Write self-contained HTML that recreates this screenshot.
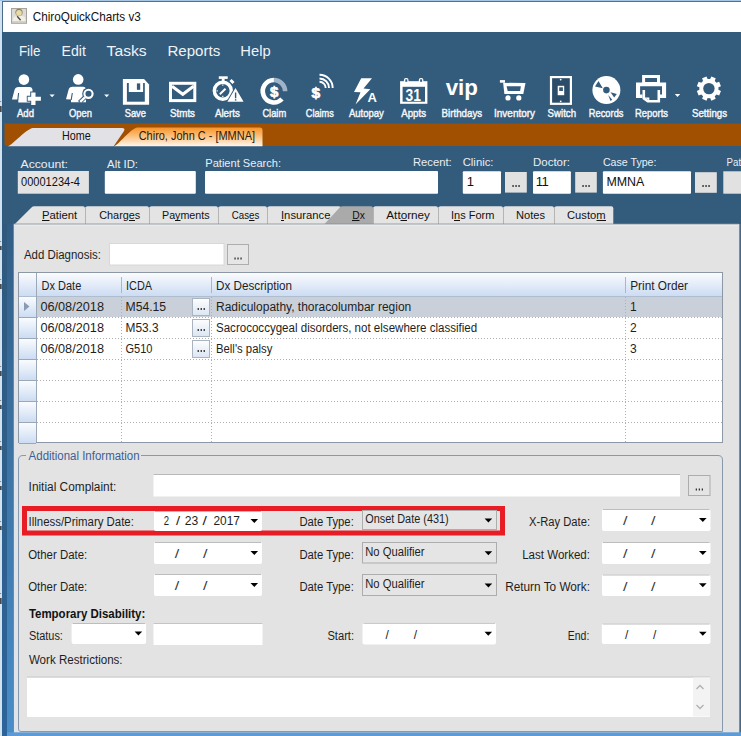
<!DOCTYPE html>
<html><head><meta charset="utf-8"><style>
html,body{margin:0;padding:0;width:741px;height:736px;overflow:hidden;background:#fff}
svg{display:block;font-family:"Liberation Sans",sans-serif}
</style></head><body>
<svg width="741" height="736" viewBox="0 0 741 736" shape-rendering="auto">
<rect x="0" y="0" width="741" height="736" fill="#d3e2ef"/>
<rect x="2" y="1" width="739" height="735" fill="#2f5a80"/>
<rect x="0" y="0" width="741" height="1" fill="#a5c6e4"/>
<rect x="3" y="1" width="738" height="1" fill="#52738f"/>
<rect x="3" y="2" width="738" height="30" fill="#ffffff"/>
<rect x="2" y="1" width="1" height="31" fill="#4a6c8a"/>
<rect x="3" y="32" width="738" height="92" fill="#335b7c"/>
<rect x="0" y="106" width="1.7" height="6" fill="#4a4a4a"/>
<rect x="0" y="101" width="1.2" height="1" fill="#8a8a8a"/>
<rect x="0" y="246" width="1.7" height="4" fill="#4a4a4a"/>
<rect x="0" y="241" width="1.2" height="1" fill="#8a8a8a"/>
<rect x="0" y="284" width="1.7" height="5" fill="#4a4a4a"/>
<rect x="0" y="279" width="1.2" height="1" fill="#8a8a8a"/>
<rect x="0" y="371" width="1.7" height="5" fill="#4a4a4a"/>
<rect x="0" y="366" width="1.2" height="1" fill="#8a8a8a"/>
<rect x="0" y="405" width="1.7" height="4" fill="#4a4a4a"/>
<rect x="0" y="400" width="1.2" height="1" fill="#8a8a8a"/>
<rect x="0" y="446" width="1.7" height="4" fill="#4a4a4a"/>
<rect x="0" y="441" width="1.2" height="1" fill="#8a8a8a"/>
<rect x="0" y="486" width="1.7" height="4" fill="#4a4a4a"/>
<rect x="0" y="481" width="1.2" height="1" fill="#8a8a8a"/>
<rect x="0" y="526" width="1.7" height="4" fill="#4a4a4a"/>
<rect x="0" y="521" width="1.2" height="1" fill="#8a8a8a"/>
<rect x="0" y="598" width="1.7" height="6" fill="#4a4a4a"/>
<rect x="0" y="593" width="1.2" height="1" fill="#8a8a8a"/>
<g><rect x="11" y="8" width="16" height="15.8" fill="#a8a39a"/><rect x="12" y="9" width="14" height="13.8" fill="#dcdcd6"/><circle cx="19" cy="12.4" r="3.6" fill="#8c7f6a"/><circle cx="19" cy="12.9" r="2.9" fill="#e8dba6"/><path d="M12.5 22.8 L13.5 17.5 Q15 16 17 16 L22 16 Q24 16 25 17.5 L25.8 22.8 Z" fill="#f2f0e6"/><path d="M17.2 16.3 L20.6 20.2" stroke="#4d4d4d" stroke-width="1.4"/><rect x="12" y="21.3" width="14" height="1.5" fill="#c9c4b8"/></g>
<text x="32.8" y="21.2" font-size="13" fill="#111" font-weight="normal" text-anchor="start" textLength="108.0" lengthAdjust="spacingAndGlyphs">ChiroQuickCharts v3</text>
<text x="18.9" y="55.5" font-size="15.3" fill="#eef3f8" font-weight="normal" text-anchor="start" textLength="21.6" lengthAdjust="spacingAndGlyphs">File</text>
<text x="61.5" y="55.5" font-size="15.3" fill="#eef3f8" font-weight="normal" text-anchor="start" textLength="24.3" lengthAdjust="spacingAndGlyphs">Edit</text>
<text x="106.6" y="55.5" font-size="15.3" fill="#eef3f8" font-weight="normal" text-anchor="start" textLength="40.1" lengthAdjust="spacingAndGlyphs">Tasks</text>
<text x="167.4" y="55.5" font-size="15.3" fill="#eef3f8" font-weight="normal" text-anchor="start" textLength="52.9" lengthAdjust="spacingAndGlyphs">Reports</text>
<text x="240.3" y="55.5" font-size="15.3" fill="#eef3f8" font-weight="normal" text-anchor="start" textLength="30.3" lengthAdjust="spacingAndGlyphs">Help</text>
<text x="17.0" y="117.0" font-size="11.5" fill="#f4f7fa" font-weight="normal" text-anchor="start" textLength="17.0" lengthAdjust="spacingAndGlyphs" stroke="#f4f7fa" stroke-width="0.45">Add</text>
<text x="69.0" y="117.0" font-size="11.5" fill="#f4f7fa" font-weight="normal" text-anchor="start" textLength="23.0" lengthAdjust="spacingAndGlyphs" stroke="#f4f7fa" stroke-width="0.45">Open</text>
<text x="124.7" y="117.0" font-size="11.5" fill="#f4f7fa" font-weight="normal" text-anchor="start" textLength="21.3" lengthAdjust="spacingAndGlyphs" stroke="#f4f7fa" stroke-width="0.45">Save</text>
<text x="170.0" y="117.0" font-size="11.5" fill="#f4f7fa" font-weight="normal" text-anchor="start" textLength="25.0" lengthAdjust="spacingAndGlyphs" stroke="#f4f7fa" stroke-width="0.45">Stmts</text>
<text x="214.9" y="117.0" font-size="11.5" fill="#f4f7fa" font-weight="normal" text-anchor="start" textLength="25.1" lengthAdjust="spacingAndGlyphs" stroke="#f4f7fa" stroke-width="0.45">Alerts</text>
<text x="262.4" y="117.0" font-size="11.5" fill="#f4f7fa" font-weight="normal" text-anchor="start" textLength="23.8" lengthAdjust="spacingAndGlyphs" stroke="#f4f7fa" stroke-width="0.45">Claim</text>
<text x="305.8" y="117.0" font-size="11.5" fill="#f4f7fa" font-weight="normal" text-anchor="start" textLength="28.0" lengthAdjust="spacingAndGlyphs" stroke="#f4f7fa" stroke-width="0.45">Claims</text>
<text x="348.9" y="117.0" font-size="11.5" fill="#f4f7fa" font-weight="normal" text-anchor="start" textLength="35.0" lengthAdjust="spacingAndGlyphs" stroke="#f4f7fa" stroke-width="0.45">Autopay</text>
<text x="401.2" y="117.0" font-size="11.5" fill="#f4f7fa" font-weight="normal" text-anchor="start" textLength="24.8" lengthAdjust="spacingAndGlyphs" stroke="#f4f7fa" stroke-width="0.45">Appts</text>
<text x="441.6" y="117.0" font-size="11.5" fill="#f4f7fa" font-weight="normal" text-anchor="start" textLength="40.6" lengthAdjust="spacingAndGlyphs" stroke="#f4f7fa" stroke-width="0.45">Birthdays</text>
<text x="494.0" y="117.0" font-size="11.5" fill="#f4f7fa" font-weight="normal" text-anchor="start" textLength="41.1" lengthAdjust="spacingAndGlyphs" stroke="#f4f7fa" stroke-width="0.45">Inventory</text>
<text x="547.6" y="117.0" font-size="11.5" fill="#f4f7fa" font-weight="normal" text-anchor="start" textLength="28.4" lengthAdjust="spacingAndGlyphs" stroke="#f4f7fa" stroke-width="0.45">Switch</text>
<text x="588.8" y="117.0" font-size="11.5" fill="#f4f7fa" font-weight="normal" text-anchor="start" textLength="34.7" lengthAdjust="spacingAndGlyphs" stroke="#f4f7fa" stroke-width="0.45">Records</text>
<text x="635.0" y="117.0" font-size="11.5" fill="#f4f7fa" font-weight="normal" text-anchor="start" textLength="33.0" lengthAdjust="spacingAndGlyphs" stroke="#f4f7fa" stroke-width="0.45">Reports</text>
<text x="691.9" y="117.0" font-size="11.5" fill="#f4f7fa" font-weight="normal" text-anchor="start" textLength="35.2" lengthAdjust="spacingAndGlyphs" stroke="#f4f7fa" stroke-width="0.45">Settings</text>
<path d="M4.5 123.5 L741 123.5 L741 146 L7 146 Q4.5 146 4.5 143.5 Z" fill="#a05000"/>
<path d="M7.5 146.5 C13 144.5, 26 129, 33 128 L122 128 Q125.5 128 124 131 L113.5 146.5 Z" fill="#e2e2e6"/>
<text x="62.0" y="139.6" font-size="12.5" fill="#111" font-weight="normal" text-anchor="start" textLength="28.7" lengthAdjust="spacingAndGlyphs">Home</text>
<defs><linearGradient id="og" x1="0" y1="0" x2="0" y2="1"><stop offset="0" stop-color="#f7952a"/><stop offset="0.45" stop-color="#fbbf7c"/><stop offset="1" stop-color="#fff8f0"/></linearGradient><linearGradient id="hg" x1="0" y1="0" x2="0" y2="1"><stop offset="0" stop-color="#fafcfe"/><stop offset="1" stop-color="#ccdcf3"/></linearGradient><linearGradient id="bg" x1="0" y1="0" x2="0" y2="1"><stop offset="0" stop-color="#fdfeff"/><stop offset="1" stop-color="#dbe6f3"/></linearGradient></defs>
<path d="M113.5 146.5 C119 144.5, 130 129, 137 127.5 L260 127.5 Q262.5 127.5 262.5 130 L262.5 146.5 Z" fill="url(#og)"/>
<text x="138.7" y="139.8" font-size="12.5" fill="#2a1a0a" font-weight="normal" text-anchor="start" textLength="116.3" lengthAdjust="spacingAndGlyphs">Chiro, John C - [MMNA]</text>
<rect x="3" y="146.5" width="738" height="78" fill="#335b7c"/>
<text x="20.5" y="167.5" font-size="11.6" fill="#e9eff5" font-weight="normal" text-anchor="start" textLength="47.5" lengthAdjust="spacingAndGlyphs">Account:</text>
<text x="107.1" y="167.7" font-size="11.6" fill="#e9eff5" font-weight="normal" text-anchor="start" textLength="30.9" lengthAdjust="spacingAndGlyphs">Alt ID:</text>
<text x="205.3" y="166.6" font-size="11.6" fill="#e9eff5" font-weight="normal" text-anchor="start" textLength="75.7" lengthAdjust="spacingAndGlyphs">Patient Search:</text>
<text x="413.0" y="165.8" font-size="11.6" fill="#e9eff5" font-weight="normal" text-anchor="start" textLength="38.7" lengthAdjust="spacingAndGlyphs">Recent:</text>
<text x="462.7" y="165.8" font-size="11.6" fill="#e9eff5" font-weight="normal" text-anchor="start" textLength="30.8" lengthAdjust="spacingAndGlyphs">Clinic:</text>
<text x="533.0" y="165.8" font-size="11.6" fill="#e9eff5" font-weight="normal" text-anchor="start" textLength="37.0" lengthAdjust="spacingAndGlyphs">Doctor:</text>
<text x="602.9" y="166.2" font-size="11.6" fill="#e9eff5" font-weight="normal" text-anchor="start" textLength="53.6" lengthAdjust="spacingAndGlyphs">Case Type:</text>
<text x="726.6" y="166.0" font-size="11.6" fill="#e9eff5" font-weight="normal" text-anchor="start" textLength="30.0" lengthAdjust="spacingAndGlyphs">Patient</text>
<rect x="17.8" y="171" width="71.1" height="22.7" fill="#e3e3e3"/>
<text x="21.0" y="185.8" font-size="13" fill="#111" font-weight="normal" text-anchor="start" textLength="59.0" lengthAdjust="spacingAndGlyphs">00001234-4</text>
<rect x="104.8" y="171.1" width="91" height="22.6" fill="#ffffff" rx="1"/>
<rect x="205" y="171.1" width="233" height="22.6" fill="#ffffff" rx="1"/>
<rect x="462.8" y="171.2" width="38.2" height="22.6" fill="#ffffff" rx="1"/>
<text x="466.7" y="185.5" font-size="13" fill="#111" font-weight="normal" text-anchor="start">1</text>
<rect x="505" y="172" width="21.8" height="20.6" fill="#e1e1e1"/>
<rect x="512.4" y="185" width="1.3" height="2" fill="#2a2a2a"/>
<rect x="515.4" y="185" width="1.3" height="2" fill="#2a2a2a"/>
<rect x="518.4" y="185" width="1.3" height="2" fill="#2a2a2a"/>
<rect x="533" y="171.2" width="37.9" height="22.6" fill="#ffffff" rx="1"/>
<text x="535.8" y="185.5" font-size="13" fill="#111" font-weight="normal" text-anchor="start">1</text>
<text x="541.6" y="185.5" font-size="13" fill="#111" font-weight="normal" text-anchor="start">1</text>
<rect x="575.2" y="172" width="21.6" height="20.6" fill="#e1e1e1"/>
<rect x="582.4" y="185" width="1.3" height="2" fill="#2a2a2a"/>
<rect x="585.4" y="185" width="1.3" height="2" fill="#2a2a2a"/>
<rect x="588.4" y="185" width="1.3" height="2" fill="#2a2a2a"/>
<rect x="602.9" y="171.2" width="88.1" height="22.5" fill="#ffffff" rx="1"/>
<text x="606.4" y="185.5" font-size="13" fill="#111" font-weight="normal" text-anchor="start" textLength="37.9" lengthAdjust="spacingAndGlyphs">MMNA</text>
<rect x="695" y="172.2" width="21.8" height="20.6" fill="#e1e1e1"/>
<rect x="702.4" y="185" width="1.3" height="2" fill="#2a2a2a"/>
<rect x="705.4" y="185" width="1.3" height="2" fill="#2a2a2a"/>
<rect x="708.4" y="185" width="1.3" height="2" fill="#2a2a2a"/>
<rect x="723.3" y="171.3" width="20" height="22.4" fill="#e1e1e1"/>
<path d="M14.9 224 L31.5 207.5 Q32.5 206.2 34.5 206.2 L83 206.2 Q85 206.2 85 208.2 L85 224 Z" fill="#e4e4e4"/>
<text x="42.0" y="218.7" font-size="11.6" fill="#111" font-weight="normal" text-anchor="start" textLength="35.2" lengthAdjust="spacingAndGlyphs">Patient</text>
<rect x="42.0" y="220" width="7.5" height="1" fill="#111"/>
<path d="M85.5 224 L85.5 208.2 Q85.5 206.2 87.5 206.2 L147 206.2 Q149 206.2 149 208.2 L149 224 Z" fill="#e4e4e4"/>
<rect x="85" y="207" width="1" height="17" fill="#b4b4b4"/>
<text x="99.2" y="218.7" font-size="11.6" fill="#111" font-weight="normal" text-anchor="start" textLength="41.1" lengthAdjust="spacingAndGlyphs">Charges</text>
<rect x="129.0" y="220" width="6.0" height="1" fill="#111"/>
<path d="M149.5 224 L149.5 208.2 Q149.5 206.2 151.5 206.2 L216 206.2 Q218 206.2 218 208.2 L218 224 Z" fill="#e4e4e4"/>
<rect x="149" y="207" width="1" height="17" fill="#b4b4b4"/>
<text x="162.0" y="218.7" font-size="11.6" fill="#111" font-weight="normal" text-anchor="start" textLength="47.6" lengthAdjust="spacingAndGlyphs">Payments</text>
<rect x="175.0" y="220" width="5.5" height="1" fill="#111"/>
<path d="M218.5 224 L218.5 208.2 Q218.5 206.2 220.5 206.2 L265 206.2 Q267 206.2 267 208.2 L267 224 Z" fill="#e4e4e4"/>
<rect x="218" y="207" width="1" height="17" fill="#b4b4b4"/>
<text x="231.8" y="218.7" font-size="11.6" fill="#111" font-weight="normal" text-anchor="start" textLength="27.5" lengthAdjust="spacingAndGlyphs">Cases</text>
<rect x="249.0" y="220" width="5.5" height="1" fill="#111"/>
<path d="M267.5 224 L267.5 208.2 Q267.5 206.2 269.5 206.2 L339 206.2 Q341 206.2 341 208.2 L341 224 Z" fill="#e4e4e4"/>
<rect x="267" y="207" width="1" height="17" fill="#b4b4b4"/>
<text x="281.0" y="218.7" font-size="11.6" fill="#111" font-weight="normal" text-anchor="start" textLength="49.4" lengthAdjust="spacingAndGlyphs">Insurance</text>
<rect x="281.0" y="220" width="3.0" height="1" fill="#111"/>
<path d="M373.5 224 L373.5 208.2 Q373.5 206.2 375.5 206.2 L436 206.2 Q438 206.2 438 208.2 L438 224 Z" fill="#e4e4e4"/>
<rect x="373" y="207" width="1" height="17" fill="#b4b4b4"/>
<text x="386.3" y="218.7" font-size="11.6" fill="#111" font-weight="normal" text-anchor="start" textLength="43.7" lengthAdjust="spacingAndGlyphs">Attorney</text>
<rect x="400.5" y="220" width="6.5" height="1" fill="#111"/>
<path d="M438.5 224 L438.5 208.2 Q438.5 206.2 440.5 206.2 L501 206.2 Q503 206.2 503 208.2 L503 224 Z" fill="#e4e4e4"/>
<rect x="438" y="207" width="1" height="17" fill="#b4b4b4"/>
<text x="451.0" y="218.7" font-size="11.6" fill="#111" font-weight="normal" text-anchor="start" textLength="43.4" lengthAdjust="spacingAndGlyphs">Ins Form</text>
<rect x="454.0" y="220" width="6.0" height="1" fill="#111"/>
<path d="M503.5 224 L503.5 208.2 Q503.5 206.2 505.5 206.2 L552 206.2 Q554 206.2 554 208.2 L554 224 Z" fill="#e4e4e4"/>
<rect x="503" y="207" width="1" height="17" fill="#b4b4b4"/>
<text x="516.0" y="218.7" font-size="11.6" fill="#111" font-weight="normal" text-anchor="start" textLength="29.0" lengthAdjust="spacingAndGlyphs">Notes</text>
<path d="M554.5 224 L554.5 208.2 Q554.5 206.2 556.5 206.2 L611.3 206.2 Q613.3 206.2 613.3 208.2 L613.3 224 Z" fill="#e4e4e4"/>
<rect x="554" y="207" width="1" height="17" fill="#b4b4b4"/>
<text x="567.0" y="218.7" font-size="11.6" fill="#111" font-weight="normal" text-anchor="start" textLength="38.6" lengthAdjust="spacingAndGlyphs">Custom</text>
<rect x="596.5" y="220" width="9.5" height="1" fill="#111"/>
<path d="M324.5 224 L340 207.2 Q341 206.2 342.5 206.2 L371 206.2 Q373 206.2 373 208.2 L373 224 Z" fill="#aaaaaa"/>
<text x="352.2" y="218.7" font-size="11.6" fill="#111" font-weight="normal" text-anchor="start" textLength="12.6" lengthAdjust="spacingAndGlyphs">Dx</text>
<rect x="352.0" y="220" width="7.5" height="1" fill="#111"/>
<rect x="13.3" y="224" width="725.7" height="509" fill="#e3e3e3"/>
<rect x="13.3" y="223.6" width="725.7" height="1" fill="#7d8c99"/>
<rect x="13.3" y="224.6" width="725.7" height="1" fill="#eeeeee"/>
<rect x="738.6" y="224" width="1" height="509" fill="#d6e0ea"/>
<rect x="739.6" y="224" width="1.4" height="509" fill="#4a6884"/>
<defs><linearGradient id="ls1" x1="0" y1="0" x2="0" y2="1"><stop offset="0" stop-color="#30597d"/><stop offset="1" stop-color="#2c6499"/></linearGradient><linearGradient id="ls2" x1="0" y1="0" x2="0" y2="1"><stop offset="0" stop-color="#325e86"/><stop offset="1" stop-color="#4a8dc8"/></linearGradient></defs>
<rect x="2" y="224" width="5" height="512" fill="url(#ls1)"/>
<rect x="7" y="224" width="6.3" height="512" fill="url(#ls2)"/>
<rect x="13" y="224" width="0.8" height="509" fill="#6f7f8f"/>
<rect x="14" y="226" width="4" height="507" fill="#e0e4e9"/>
<rect x="7" y="732.3" width="734" height="3.7" fill="#5d9bd6"/>
<text x="23.9" y="258.6" font-size="12" fill="#1e1e1e" font-weight="normal" text-anchor="start" textLength="77.0" lengthAdjust="spacingAndGlyphs">Add Diagnosis:</text>
<rect x="109.5" y="243.5" width="114.5" height="21.5" fill="#ffffff" stroke="#d8d8d8" stroke-width="1"/>
<rect x="227.5" y="244.5" width="21" height="20" fill="#e6e6e6" stroke="#adadad" stroke-width="1"/>
<rect x="234.4" y="257.5" width="1.3" height="2" fill="#333"/>
<rect x="237.4" y="257.5" width="1.3" height="2" fill="#333"/>
<rect x="240.4" y="257.5" width="1.3" height="2" fill="#333"/>
<rect x="18" y="272" width="705" height="171" fill="#8c98a6"/>
<rect x="19" y="273" width="703" height="169" fill="#ffffff"/>
<rect x="19" y="273" width="703" height="23" fill="url(#hg)"/>
<rect x="19" y="296" width="703" height="1" fill="#aebdd0"/>
<rect x="19" y="297" width="17" height="20" fill="url(#hg)"/>
<rect x="19" y="317" width="17" height="1" fill="#9aa8b8"/>
<rect x="19" y="318" width="17" height="20" fill="url(#hg)"/>
<rect x="19" y="338" width="17" height="1" fill="#9aa8b8"/>
<rect x="19" y="339" width="17" height="20" fill="url(#hg)"/>
<rect x="19" y="359" width="17" height="1" fill="#9aa8b8"/>
<rect x="19" y="360" width="17" height="20" fill="url(#hg)"/>
<rect x="19" y="380" width="17" height="1" fill="#9aa8b8"/>
<rect x="19" y="381" width="17" height="20" fill="url(#hg)"/>
<rect x="19" y="401" width="17" height="1" fill="#9aa8b8"/>
<rect x="19" y="402" width="17" height="20" fill="url(#hg)"/>
<rect x="19" y="422" width="17" height="1" fill="#9aa8b8"/>
<rect x="19" y="423" width="17" height="20" fill="url(#hg)"/>
<rect x="19" y="443" width="17" height="1" fill="#9aa8b8"/>
<rect x="36" y="273" width="1" height="169" fill="#9aa8b8"/>
<rect x="37" y="297" width="685" height="20" fill="#c9d0d9"/>
<line x1="37" y1="317.5" x2="722" y2="317.5" stroke="#b0b0b0" stroke-width="1" stroke-dasharray="1 2"/>
<line x1="37" y1="338.5" x2="722" y2="338.5" stroke="#b0b0b0" stroke-width="1" stroke-dasharray="1 2"/>
<line x1="37" y1="359.5" x2="722" y2="359.5" stroke="#b0b0b0" stroke-width="1" stroke-dasharray="1 2"/>
<line x1="37" y1="380.5" x2="722" y2="380.5" stroke="#b0b0b0" stroke-width="1" stroke-dasharray="1 2"/>
<line x1="37" y1="401.5" x2="722" y2="401.5" stroke="#b0b0b0" stroke-width="1" stroke-dasharray="1 2"/>
<line x1="37" y1="422.5" x2="722" y2="422.5" stroke="#b0b0b0" stroke-width="1" stroke-dasharray="1 2"/>
<line x1="121.5" y1="297" x2="121.5" y2="442" stroke="#b0b0b0" stroke-width="1" stroke-dasharray="1 2"/>
<rect x="121.0" y="277" width="1" height="16" fill="#aab6c4"/>
<line x1="211.5" y1="297" x2="211.5" y2="442" stroke="#b0b0b0" stroke-width="1" stroke-dasharray="1 2"/>
<rect x="211.0" y="277" width="1" height="16" fill="#aab6c4"/>
<line x1="625.5" y1="297" x2="625.5" y2="442" stroke="#b0b0b0" stroke-width="1" stroke-dasharray="1 2"/>
<rect x="625.0" y="277" width="1" height="16" fill="#aab6c4"/>
<path d="M24 302 L29.5 306.5 L24 311 Z" fill="#8a9ab0"/>
<text x="41.6" y="289.6" font-size="12" fill="#1e1e1e" font-weight="normal" text-anchor="start" textLength="39.7" lengthAdjust="spacingAndGlyphs">Dx Date</text>
<text x="126.0" y="289.6" font-size="12" fill="#1e1e1e" font-weight="normal" text-anchor="start" textLength="26.0" lengthAdjust="spacingAndGlyphs">ICDA</text>
<text x="216.0" y="289.6" font-size="12" fill="#1e1e1e" font-weight="normal" text-anchor="start" textLength="76.0" lengthAdjust="spacingAndGlyphs">Dx Description</text>
<text x="630.2" y="289.6" font-size="12" fill="#1e1e1e" font-weight="normal" text-anchor="start" textLength="57.8" lengthAdjust="spacingAndGlyphs">Print Order</text>
<text x="40.4" y="311.2" font-size="12" fill="#1e1e1e" font-weight="normal" text-anchor="start" textLength="63.6" lengthAdjust="spacingAndGlyphs">06/08/2018</text>
<text x="125.5" y="311.2" font-size="12" fill="#1e1e1e" font-weight="normal" text-anchor="start" textLength="40.6" lengthAdjust="spacingAndGlyphs">M54.15</text>
<text x="216.0" y="311.2" font-size="12" fill="#1e1e1e" font-weight="normal" text-anchor="start" textLength="195.3" lengthAdjust="spacingAndGlyphs">Radiculopathy, thoracolumbar region</text>
<text x="630.0" y="311.2" font-size="12" fill="#1e1e1e" font-weight="normal" text-anchor="start">1</text>
<rect x="192.5" y="298.5" width="17" height="17" fill="url(#bg)" stroke="#a9b4c0"/>
<rect x="197.6" y="308" width="1.3" height="2" fill="#333"/>
<rect x="200.6" y="308" width="1.3" height="2" fill="#333"/>
<rect x="203.6" y="308" width="1.3" height="2" fill="#333"/>
<text x="40.4" y="332.1" font-size="12" fill="#1e1e1e" font-weight="normal" text-anchor="start" textLength="63.6" lengthAdjust="spacingAndGlyphs">06/08/2018</text>
<text x="125.5" y="332.1" font-size="12" fill="#1e1e1e" font-weight="normal" text-anchor="start" textLength="33.0" lengthAdjust="spacingAndGlyphs">M53.3</text>
<text x="216.0" y="332.1" font-size="12" fill="#1e1e1e" font-weight="normal" text-anchor="start" textLength="261.2" lengthAdjust="spacingAndGlyphs">Sacrococcygeal disorders, not elsewhere classified</text>
<text x="630.0" y="332.1" font-size="12" fill="#1e1e1e" font-weight="normal" text-anchor="start">2</text>
<rect x="192.5" y="319.5" width="17" height="17" fill="url(#bg)" stroke="#a9b4c0"/>
<rect x="197.6" y="329" width="1.3" height="2" fill="#333"/>
<rect x="200.6" y="329" width="1.3" height="2" fill="#333"/>
<rect x="203.6" y="329" width="1.3" height="2" fill="#333"/>
<text x="40.4" y="353.0" font-size="12" fill="#1e1e1e" font-weight="normal" text-anchor="start" textLength="63.6" lengthAdjust="spacingAndGlyphs">06/08/2018</text>
<text x="125.5" y="353.0" font-size="12" fill="#1e1e1e" font-weight="normal" text-anchor="start" textLength="27.0" lengthAdjust="spacingAndGlyphs">G510</text>
<text x="216.0" y="353.0" font-size="12" fill="#1e1e1e" font-weight="normal" text-anchor="start" textLength="56.3" lengthAdjust="spacingAndGlyphs">Bell's palsy</text>
<text x="630.0" y="353.0" font-size="12" fill="#1e1e1e" font-weight="normal" text-anchor="start">3</text>
<rect x="192.5" y="340.5" width="17" height="17" fill="url(#bg)" stroke="#a9b4c0"/>
<rect x="197.6" y="350" width="1.3" height="2" fill="#333"/>
<rect x="200.6" y="350" width="1.3" height="2" fill="#333"/>
<rect x="203.6" y="350" width="1.3" height="2" fill="#333"/>
<path d="M26 455.5 L23 455.5 Q18.5 455.5 18.5 460 L18.5 729 Q18.5 731.5 21 731.5 L722.5 731.5 L722.5 460 Q722.5 455.5 718 455.5 L141 455.5" fill="none" stroke="#8899ae" stroke-width="1"/>
<text x="28.6" y="459.6" font-size="12" fill="#3d5f95" font-weight="normal" text-anchor="start" textLength="111.0" lengthAdjust="spacingAndGlyphs">Additional Information</text>
<text x="28.6" y="490.6" font-size="12" fill="#1e1e1e" font-weight="normal" text-anchor="start" textLength="87.7" lengthAdjust="spacingAndGlyphs">Initial Complaint:</text>
<rect x="153.5" y="474" width="526.5" height="22.5" fill="#ffffff"/>
<rect x="153.5" y="474" width="526.5" height="1" fill="#b9b9b9"/>
<rect x="688.5" y="475.5" width="21.5" height="20" fill="#e4e4e4" stroke="#adadad" stroke-width="1"/>
<rect x="695.6999999999999" y="488.5" width="1.3" height="2" fill="#333"/>
<rect x="698.6999999999999" y="488.5" width="1.3" height="2" fill="#333"/>
<rect x="701.6999999999999" y="488.5" width="1.3" height="2" fill="#333"/>
<rect x="24.5" y="508.5" width="478" height="24.5" fill="none" stroke="#e81c25" stroke-width="5"/>
<text x="28.6" y="525.8" font-size="12" fill="#1e1e1e" font-weight="normal" text-anchor="start" textLength="105.3" lengthAdjust="spacingAndGlyphs">Illness/Primary Date:</text>
<text x="28.2" y="558.8" font-size="12" fill="#1e1e1e" font-weight="normal" text-anchor="start" textLength="59.0" lengthAdjust="spacingAndGlyphs">Other Date:</text>
<text x="28.2" y="590.5" font-size="12" fill="#1e1e1e" font-weight="normal" text-anchor="start" textLength="59.0" lengthAdjust="spacingAndGlyphs">Other Date:</text>
<rect x="154" y="511" width="108" height="20" fill="#ffffff" rx="2"/>
<rect x="155" y="511" width="106" height="1" fill="#bdbdbd"/>
<path d="M250.5 519.0 L258.1 519.0 L254.3 523.0 Z" fill="#000"/>
<rect x="154" y="542" width="108" height="22" fill="#ffffff" rx="2"/>
<rect x="155" y="542" width="106" height="1" fill="#bdbdbd"/>
<path d="M250.5 551.0 L258.1 551.0 L254.3 555.0 Z" fill="#000"/>
<rect x="154" y="574" width="108" height="22" fill="#ffffff" rx="2"/>
<rect x="155" y="574" width="106" height="1" fill="#bdbdbd"/>
<path d="M250.5 583.0 L258.1 583.0 L254.3 587.0 Z" fill="#000"/>
<text x="163.8" y="525.0" font-size="13" fill="#1e1e1e" font-weight="normal" text-anchor="start" textLength="5.3" lengthAdjust="spacingAndGlyphs">2</text>
<text x="175.9" y="525.0" font-size="13" fill="#1e1e1e" font-weight="normal" text-anchor="start" textLength="4.1" lengthAdjust="spacingAndGlyphs">/</text>
<text x="184.8" y="525.0" font-size="13" fill="#1e1e1e" font-weight="normal" text-anchor="start" textLength="13.5" lengthAdjust="spacingAndGlyphs">23</text>
<text x="202.6" y="525.0" font-size="13" fill="#1e1e1e" font-weight="normal" text-anchor="start" textLength="4.4" lengthAdjust="spacingAndGlyphs">/</text>
<text x="213.5" y="525.0" font-size="13" fill="#1e1e1e" font-weight="normal" text-anchor="start" textLength="26.4" lengthAdjust="spacingAndGlyphs">2017</text>
<text x="174.8" y="558.0" font-size="12" fill="#3a3a3a" font-weight="normal" text-anchor="start" textLength="4.5" lengthAdjust="spacingAndGlyphs">/</text>
<text x="202.9" y="558.0" font-size="12" fill="#3a3a3a" font-weight="normal" text-anchor="start" textLength="4.5" lengthAdjust="spacingAndGlyphs">/</text>
<text x="174.8" y="589.5" font-size="12" fill="#3a3a3a" font-weight="normal" text-anchor="start" textLength="4.5" lengthAdjust="spacingAndGlyphs">/</text>
<text x="202.9" y="589.5" font-size="12" fill="#3a3a3a" font-weight="normal" text-anchor="start" textLength="4.5" lengthAdjust="spacingAndGlyphs">/</text>
<text x="299.4" y="526.0" font-size="12" fill="#1e1e1e" font-weight="normal" text-anchor="start" textLength="54.4" lengthAdjust="spacingAndGlyphs">Date Type:</text>
<text x="299.4" y="559.3" font-size="12" fill="#1e1e1e" font-weight="normal" text-anchor="start" textLength="54.4" lengthAdjust="spacingAndGlyphs">Date Type:</text>
<text x="299.4" y="590.9" font-size="12" fill="#1e1e1e" font-weight="normal" text-anchor="start" textLength="54.4" lengthAdjust="spacingAndGlyphs">Date Type:</text>
<rect x="362.5" y="510.5" width="134" height="19" fill="#e5e5e5" stroke="#adadad" stroke-width="1"/>
<text x="365.2" y="523.3" font-size="12" fill="#1e1e1e" font-weight="normal" text-anchor="start" textLength="83.5" lengthAdjust="spacingAndGlyphs">Onset Date (431)</text>
<path d="M484.6 518.6 L492.2 518.6 L488.4 522.4 Z" fill="#000"/>
<rect x="362.5" y="542.5" width="134" height="20.5" fill="#e5e5e5" stroke="#adadad" stroke-width="1"/>
<text x="365.2" y="556.0" font-size="12" fill="#1e1e1e" font-weight="normal" text-anchor="start" textLength="59.3" lengthAdjust="spacingAndGlyphs">No Qualifier</text>
<path d="M484.6 551.35 L492.2 551.35 L488.4 555.15 Z" fill="#000"/>
<rect x="362.5" y="574.5" width="134" height="21" fill="#e5e5e5" stroke="#adadad" stroke-width="1"/>
<text x="365.2" y="588.3" font-size="12" fill="#1e1e1e" font-weight="normal" text-anchor="start" textLength="59.3" lengthAdjust="spacingAndGlyphs">No Qualifier</text>
<path d="M484.6 583.6 L492.2 583.6 L488.4 587.4 Z" fill="#000"/>
<text x="590.0" y="526.0" font-size="12" fill="#1e1e1e" font-weight="normal" text-anchor="end" textLength="61.0" lengthAdjust="spacingAndGlyphs">X-Ray Date:</text>
<text x="590.0" y="558.8" font-size="12" fill="#1e1e1e" font-weight="normal" text-anchor="end" textLength="67.8" lengthAdjust="spacingAndGlyphs">Last Worked:</text>
<text x="590.0" y="590.5" font-size="12" fill="#1e1e1e" font-weight="normal" text-anchor="end" textLength="84.8" lengthAdjust="spacingAndGlyphs">Return To Work:</text>
<rect x="602" y="509" width="108.5" height="22" fill="#ffffff" rx="2"/>
<rect x="603" y="509" width="106.5" height="1" fill="#bdbdbd"/>
<path d="M699.0 518.0 L706.5999999999999 518.0 L702.8 522.0 Z" fill="#000"/>
<text x="623.0" y="525.0" font-size="12" fill="#3a3a3a" font-weight="normal" text-anchor="start" textLength="4.5" lengthAdjust="spacingAndGlyphs">/</text>
<text x="651.0" y="525.0" font-size="12" fill="#3a3a3a" font-weight="normal" text-anchor="start" textLength="4.5" lengthAdjust="spacingAndGlyphs">/</text>
<rect x="602" y="542" width="108.5" height="22" fill="#ffffff" rx="2"/>
<rect x="603" y="542" width="106.5" height="1" fill="#bdbdbd"/>
<path d="M699.0 551.0 L706.5999999999999 551.0 L702.8 555.0 Z" fill="#000"/>
<text x="623.0" y="558.0" font-size="12" fill="#3a3a3a" font-weight="normal" text-anchor="start" textLength="4.5" lengthAdjust="spacingAndGlyphs">/</text>
<text x="651.0" y="558.0" font-size="12" fill="#3a3a3a" font-weight="normal" text-anchor="start" textLength="4.5" lengthAdjust="spacingAndGlyphs">/</text>
<rect x="602" y="574.5" width="108.5" height="21.5" fill="#ffffff" rx="2"/>
<rect x="603" y="574.5" width="106.5" height="1" fill="#bdbdbd"/>
<path d="M699.0 583.25 L706.5999999999999 583.25 L702.8 587.25 Z" fill="#000"/>
<text x="623.0" y="590.5" font-size="12" fill="#3a3a3a" font-weight="normal" text-anchor="start" textLength="4.5" lengthAdjust="spacingAndGlyphs">/</text>
<text x="651.0" y="590.5" font-size="12" fill="#3a3a3a" font-weight="normal" text-anchor="start" textLength="4.5" lengthAdjust="spacingAndGlyphs">/</text>
<text x="28.9" y="617.7" font-size="12" fill="#111" font-weight="bold" text-anchor="start" textLength="116.4" lengthAdjust="spacingAndGlyphs">Temporary Disability:</text>
<text x="28.9" y="639.6" font-size="12" fill="#1e1e1e" font-weight="normal" text-anchor="start" textLength="34.0" lengthAdjust="spacingAndGlyphs">Status:</text>
<rect x="71.6" y="623" width="74.5" height="21" fill="#ffffff" rx="2"/>
<rect x="72.6" y="623" width="72.5" height="1" fill="#bdbdbd"/>
<path d="M134.6 631.5 L142.20000000000002 631.5 L138.4 635.5 Z" fill="#000"/>
<rect x="153.5" y="623" width="109" height="22" fill="#ffffff"/>
<rect x="153.5" y="623" width="109" height="1" fill="#c4c4c4"/>
<text x="354.1" y="639.5" font-size="12" fill="#1e1e1e" font-weight="normal" text-anchor="end" textLength="26.7" lengthAdjust="spacingAndGlyphs">Start:</text>
<rect x="362.5" y="622.8" width="133.5" height="21.8" fill="#ffffff" rx="2"/>
<rect x="363.5" y="622.8" width="131.5" height="1" fill="#bdbdbd"/>
<path d="M484.5 631.6999999999999 L492.1 631.6999999999999 L488.3 635.6999999999999 Z" fill="#000"/>
<text x="385.6" y="638.5" font-size="12" fill="#1e1e1e" font-weight="normal" text-anchor="start">/</text>
<text x="413.8" y="638.5" font-size="12" fill="#1e1e1e" font-weight="normal" text-anchor="start">/</text>
<text x="589.3" y="639.5" font-size="12" fill="#1e1e1e" font-weight="normal" text-anchor="end" textLength="21.5" lengthAdjust="spacingAndGlyphs">End:</text>
<rect x="601.8" y="623.5" width="108.7" height="20.5" fill="#ffffff" rx="2"/>
<rect x="602.8" y="623.5" width="106.7" height="1" fill="#bdbdbd"/>
<path d="M699.0 631.75 L706.5999999999999 631.75 L702.8 635.75 Z" fill="#000"/>
<text x="625.0" y="638.5" font-size="12" fill="#1e1e1e" font-weight="normal" text-anchor="start">/</text>
<text x="653.0" y="638.5" font-size="12" fill="#1e1e1e" font-weight="normal" text-anchor="start">/</text>
<text x="28.9" y="663.8" font-size="12" fill="#1e1e1e" font-weight="normal" text-anchor="start" textLength="93.7" lengthAdjust="spacingAndGlyphs">Work Restrictions:</text>
<rect x="27" y="676.5" width="683" height="40.5" fill="#ffffff"/>
<rect x="27" y="676.5" width="683" height="1" fill="#b9b9b9"/>
<rect x="693" y="677.5" width="17" height="39" fill="#f3f3f3"/>
<path d="M696.5 689 L700 685.5 L703.5 689" fill="none" stroke="#b0b0b0" stroke-width="1.3"/>
<path d="M696.5 705 L700 708.5 L703.5 705" fill="none" stroke="#b0b0b0" stroke-width="1.3"/>
<g><circle cx="23.9" cy="79.6" r="5.3" fill="#fff"/><path d="M12 99.6 L14.5 90 Q15.3 87 18.5 87 L29.5 87 Q32.3 87 32.5 90 L32.5 102.4 L18.3 102.4 L18.3 99.6 Z" fill="#fff"/><path d="M18.6 93 L17.8 100" stroke="#335b7c" stroke-width="1.1"/><path d="M30.2 91.4 L36.5 91.4 L36.5 95.7 L41.8 95.7 L41.8 101.8 L36.5 101.8 L36.5 105.5 L30.2 105.5 L30.2 101.8 L26.8 101.8 L26.8 95.7 L30.2 95.7 Z" fill="#335b7c"/><path d="M31.2 92.4 L35.5 92.4 L35.5 96.7 L40.9 96.7 L40.9 100.8 L35.5 100.8 L35.5 105.1 L31.2 105.1 L31.2 100.8 L27.7 100.8 L27.7 96.7 L31.2 96.7 Z" fill="#fff"/><path d="M49.5 94.4 L54.7 94.4 L52.1 97.2 Z" fill="#fff"/><circle cx="78.2" cy="79.4" r="5.3" fill="#fff"/><path d="M66 99.3 L68.5 90 Q69.3 86.7 72.5 86.7 L83 86.7 Q85.5 86.7 86 89 L86 102.2 L71 102.2 L71 99.5 Z" fill="#fff"/><path d="M72.3 93 L71.2 100" stroke="#335b7c" stroke-width="1.1"/><circle cx="88.5" cy="93.8" r="6.3" fill="#335b7c"/><path d="M84.5 97.5 L79.5 102.5" stroke="#335b7c" stroke-width="4.2"/><circle cx="88.5" cy="93.8" r="4.1" fill="none" stroke="#fff" stroke-width="2.1"/><path d="M85 97.3 L80.2 101.8" stroke="#fff" stroke-width="2.4"/><path d="M104.2 94.4 L109.2 94.4 L106.7 97.2 Z" fill="#fff"/><path d="M122.9 79 L144 79 L149.1 84.4 L149.1 104.7 L122.9 104.7 Z" fill="#fff"/><rect x="126.9" y="83" width="17.9" height="18.7" fill="#335b7c"/><rect x="128.8" y="83" width="14.3" height="9" fill="#fff"/><rect x="136.9" y="83.4" width="3.3" height="6.4" fill="#335b7c"/><rect x="170.5" y="83.3" width="24.3" height="17.3" fill="none" stroke="#fff" stroke-width="3"/><path d="M172 86.3 L182.8 94.3 L193.5 86.3" fill="none" stroke="#fff" stroke-width="3"/><circle cx="222.8" cy="90.8" r="8.5" fill="none" stroke="#fff" stroke-width="3.4"/><rect x="218.8" y="76.3" width="8.9" height="2.6" fill="#fff"/><rect x="221.8" y="78.5" width="2.8" height="3.5" fill="#fff"/><path d="M230.5 80 L233.5 83" stroke="#fff" stroke-width="3"/><path d="M219.8 94.2 L225.5 88.8" stroke="#fff" stroke-width="2"/><path d="M222.8 84.5 L222.8 85.8 M222.8 95.8 L222.8 97 M216.5 90.8 L217.8 90.8" stroke="#fff" stroke-width="1.2"/><path d="M235.5 86 L245.5 103.3 L225.5 103.3 Z" fill="#335b7c"/><path d="M235.5 87.9 L243.6 101.7 L227.4 101.7 Z" fill="#fff"/><rect x="234.9" y="92.5" width="1.4" height="5.8" fill="#335b7c"/><rect x="234.9" y="99.2" width="1.4" height="1.4" fill="#335b7c"/><path d="M273.9 80 A11.2 11.2 0 0 1 285.1 91.2" fill="none" stroke="#9fb4c8" stroke-width="4.6"/><path d="M273.9 80 A11.2 11.2 0 1 0 282 99" fill="none" stroke="#fff" stroke-width="4.6"/><text x="274.1" y="96.6" font-size="15" font-weight="bold" fill="#fff" stroke="#fff" stroke-width="0.7" text-anchor="middle">$</text><text x="315.9" y="97.6" font-size="15.5" font-weight="bold" fill="#fff" stroke="#fff" stroke-width="0.7" text-anchor="middle">$</text><path d="M319.5 81.8 A6.2 6.2 0 0 1 325.7 88" fill="none" stroke="#fff" stroke-width="1.9"/><path d="M319.5 78.5 A9.5 9.5 0 0 1 329 88" fill="none" stroke="#fff" stroke-width="1.9"/><path d="M319.5 74.8 A13.2 13.2 0 0 1 332.7 88" fill="none" stroke="#fff" stroke-width="1.9"/><path d="M361.2 78.2 L372 78.2 L363.5 88.5 L370.3 89.3 L355.5 104.4 L360.5 92.2 L354 92 Z" fill="#fff"/><text x="372.1" y="101.7" font-size="13" font-weight="bold" fill="#fff" text-anchor="middle">A</text><rect x="400.1" y="81.2" width="27.3" height="22.6" fill="#fff"/><rect x="402.6" y="86.8" width="22.4" height="14.9" fill="#335b7c"/><rect x="403.9" y="78" width="4.6" height="5" rx="2" fill="#fff"/><rect x="418.8" y="78" width="4.6" height="5" rx="2" fill="#fff"/><rect x="405.3" y="79.3" width="2" height="2.5" fill="#335b7c"/><rect x="420.1" y="79.3" width="2" height="2.5" fill="#335b7c"/><text x="413.2" y="100.6" font-size="17" font-weight="bold" fill="#fff" text-anchor="middle" textLength="15.4" lengthAdjust="spacingAndGlyphs">31</text><text x="445.7" y="95" font-size="21.5" font-weight="bold" fill="#fff" textLength="32.3" lengthAdjust="spacingAndGlyphs">vip</text><rect x="499.9" y="80.1" width="5.1" height="2.6" fill="#fff"/><path d="M503.1 82.8 L525.5 83.1 L523.3 94.1 L504.4 94.1 Z" fill="#fff"/><path d="M506.6 86.3 L520.9 86.3 L520.1 90.9 L507.7 90.9 Z" fill="#335b7c"/><circle cx="508" cy="97.9" r="2.6" fill="#fff"/><circle cx="518.8" cy="97.9" r="2.6" fill="#fff"/><rect x="551" y="77.1" width="19.9" height="26.7" fill="#2c4d6a" stroke="#fff" stroke-width="2.2"/><rect x="557.7" y="85.8" width="6.5" height="9.4" fill="#fff"/><rect x="559.2" y="87.3" width="3.7" height="3.7" fill="#3b5870"/><circle cx="560.7" cy="79.6" r="0.9" fill="#fff"/><circle cx="560.7" cy="101.3" r="0.9" fill="#fff"/><circle cx="606.4" cy="90.1" r="14" fill="#fff"/><circle cx="606.4" cy="90.1" r="3.3" fill="#335b7c"/><path d="M595 86.5 L598.5 81 L602.8 88.2 Z" fill="#335b7c"/><path d="M610.5 92.3 L616.8 94 L614.2 97.6 Z" fill="#335b7c"/><path d="M608.2 95 L612.2 99.8 L610.5 101 Z" fill="#335b7c"/><rect x="643.6" y="76.5" width="14.9" height="7" fill="none" stroke="#fff" stroke-width="3"/><path d="M636 82.5 L666.1 82.5 L666.1 98 L660 98 L660 94.6 L662 94.6 L662 86.2 L640.1 86.2 L640.1 94.6 L642.5 94.6 L642.5 98 L636 98 Z" fill="#fff"/><path d="M643.8 89.9 L643.8 98.3 L647.8 101.2 L658.8 101.2 L658.8 89.9" fill="none" stroke="#fff" stroke-width="2.6"/><path d="M644.5 97.5 L649.3 97.5 L649.3 100.5 Z" fill="#fff"/><path d="M674.8 93.9 L680.2 93.9 L677.5 97 Z" fill="#fff"/><path d="M708.65 79.00 L710.15 79.08 L711.35 76.55 L715.69 78.34 L714.74 80.98 L715.51 81.64 L716.52 82.76 L719.16 81.81 L720.95 86.15 L718.42 87.35 L718.50 88.35 L718.42 89.85 L720.95 91.05 L719.16 95.39 L716.52 94.44 L715.86 95.21 L714.74 96.22 L715.69 98.86 L711.35 100.65 L710.15 98.12 L709.15 98.20 L707.65 98.12 L706.45 100.65 L702.11 98.86 L703.06 96.22 L702.29 95.56 L701.28 94.44 L698.64 95.39 L696.85 91.05 L699.38 89.85 L699.30 88.85 L699.38 87.35 L696.85 86.15 L698.64 81.81 L701.28 82.76 L701.94 81.99 L703.06 80.98 L702.11 78.34 L706.45 76.55 L707.65 79.08 Z" fill="#fff"/><circle cx="708.9" cy="88.6" r="5.7" fill="#335b7c"/></g>
</svg>
</body></html>
